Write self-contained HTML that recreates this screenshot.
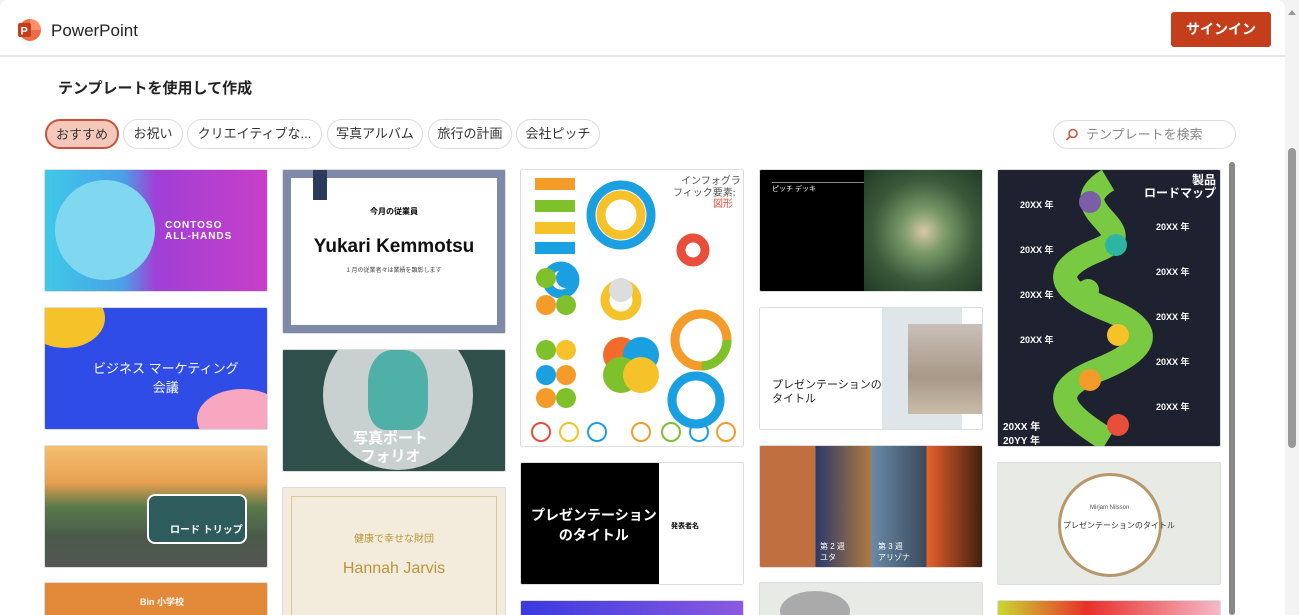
<!DOCTYPE html>
<html><head><meta charset="utf-8"><style>
*{box-sizing:border-box;margin:0;padding:0}
html,body{width:1299px;height:615px;overflow:hidden}
body{background:#f3f3f3;font-family:"Liberation Sans","Noto Sans CJK JP",sans-serif;position:relative}
.win{position:absolute;left:0;top:0;width:1285px;height:615px;background:#fff;border-radius:8px 8px 0 0;overflow:hidden}
.hdr{position:absolute;left:0;top:0;width:1285px;height:57px;border-bottom:2px solid #e6e6e6}
.logo{position:absolute;left:17px;top:18px}
.brand{position:absolute;left:51px;top:21px;font-size:17px;color:#222}
.sign{position:absolute;left:1171px;top:12px;width:100px;height:35px;background:#c43e1c;color:#fff;border-radius:3px;font-size:14px;font-weight:bold;text-align:center;line-height:35px}
h1{position:absolute;left:58px;top:77px;font-size:15px;font-weight:bold;color:#222}
.chip{position:absolute;top:119px;height:30px;border:1px solid #ddd;border-radius:15px;font-size:13px;color:#333;line-height:28px;text-align:center}
.search{position:absolute;left:1053px;top:120px;width:183px;height:29px;border:1px solid #ddd;border-radius:15px;font-size:13px;color:#888;line-height:27px;padding-left:32px}
.c{position:absolute;width:224px;border:1px solid #ddd;overflow:hidden;border-radius:2px}
.sb{position:absolute;left:1229px;top:162px;width:6px;height:453px;background:#888;border-radius:3px}
.psb{position:absolute;left:1288px;top:148px;width:8px;height:300px;background:#999;border-radius:4px}
.t{position:absolute;color:#fff;font-weight:bold}
</style></head><body>
<div class="win">
<div class="hdr">
<svg class="logo" width="24" height="24" viewBox="0 0 24 24"><circle cx="13" cy="12" r="11" fill="#ed6c47"/><path d="M13 1a11 11 0 0 1 11 11H13z" fill="#ff8f6b"/><rect x="1" y="5" width="13" height="14" rx="2" fill="#c43e1c"/><text x="3.5" y="16.5" font-size="11" font-weight="bold" fill="#fff" font-family="Liberation Sans">P</text></svg>
<div class="brand">PowerPoint</div>
<div class="sign">サインイン</div>
</div>
<h1>テンプレートを使用して作成</h1>
<div class="chip" style="left:45px;width:74px;background:#f5c8bb;border:2px solid #c4553a">おすすめ</div>
<div class="chip" style="left:123px;width:60px">お祝い</div>
<div class="chip" style="left:187px;width:135px">クリエイティブな...</div>
<div class="chip" style="left:327px;width:96px">写真アルバム</div>
<div class="chip" style="left:428px;width:84px">旅行の計画</div>
<div class="chip" style="left:516px;width:84px">会社ピッチ</div>
<div class="search"><svg style="position:absolute;left:11px;top:7px" width="14" height="14" viewBox="0 0 14 14"><circle cx="8" cy="5.5" r="4" fill="none" stroke="#c4553a" stroke-width="1.5"/><path d="M5 8.5L1.5 12" stroke="#c4553a" stroke-width="1.6"/></svg>テンプレートを検索</div>

<!-- col1 -->
<div class="c" style="left:44px;top:169px;height:123px;background:linear-gradient(90deg,#3ec9e8 0,#4aa0e8 35%,#a03fd6 50%,#c83fc8)"><div style="position:absolute;left:10px;top:10px;width:100px;height:100px;border-radius:50%;background:#7fd8f0"></div><div class="t" style="left:120px;top:50px;font-size:10px;letter-spacing:1px">CONTOSO<br>ALL-HANDS</div></div>
<div class="c" style="left:44px;top:307px;height:123px;background:#2f4de6"><div style="position:absolute;left:-20px;top:-20px;width:80px;height:60px;border-radius:50%;background:#f5c22a"></div><div style="position:absolute;right:-20px;bottom:-20px;width:90px;height:60px;border-radius:50%;background:#f7a7c0"></div><div class="t" style="left:48px;top:50px;font-size:13px;font-weight:normal;text-align:center">ビジネス マーケティング<br>会議</div></div>
<div class="c" style="left:44px;top:445px;height:123px;background:linear-gradient(180deg,#f0c070 0,#e8a050 30%,#5a7a4a 50%,#4a5a4a 75%,#555 100%)"><div style="position:absolute;left:102px;top:48px;width:100px;height:50px;background:#2e5b5b;border:2px solid #fff;border-radius:8px"></div><div class="t" style="left:125px;top:75px;font-size:10px">ロード トリップ</div></div>
<div class="c" style="left:44px;top:582px;height:40px;background:#e38a3a"><div class="t" style="left:95px;top:12px;font-size:9px">Bin 小学校</div></div>
<!-- col2 -->
<div class="c" style="left:282px;top:169px;height:165px;background:#7f8aa8;padding:8px"><div style="background:#fff;width:100%;height:100%;position:relative"><div style="position:absolute;left:22px;top:-8px;width:14px;height:30px;background:#2b3a5c"></div><div style="position:absolute;top:28px;width:100%;text-align:center;font-size:8px;font-weight:bold">今月の従業員</div><div style="position:absolute;top:58px;width:100%;text-align:center;font-size:19px;font-weight:bold;color:#111">Yukari Kemmotsu</div><div style="position:absolute;top:87px;width:100%;text-align:center;font-size:6px;color:#444">1 月の従業者々は業績を顕彰します</div></div></div>
<div class="c" style="left:282px;top:349px;height:123px;background:#2f4f4a"><div style="position:absolute;left:40px;top:-30px;width:150px;height:150px;border-radius:50%;background:#c8d0d0"></div><div style="position:absolute;left:85px;top:0;width:60px;height:80px;border-radius:40% 40% 30% 30%;background:#4fb0a8"></div><div class="t" style="left:70px;top:80px;font-size:15px;text-align:center;line-height:18px">写真ポート<br>フォリオ</div></div>
<div class="c" style="left:282px;top:487px;height:135px;background:#f3ecdc"><div style="position:absolute;left:8px;top:8px;right:8px;bottom:0;border:1px solid #d8c89a"></div><div style="position:absolute;top:42px;width:100%;text-align:center;font-size:10px;color:#b8963a">健康で幸せな財団</div><div style="position:absolute;top:72px;width:100%;text-align:center;font-size:16px;color:#b8963a">Hannah Jarvis</div></div>
<!-- col3 -->
<div class="c" style="left:520px;top:169px;height:278px;background:#fff">
<svg width="224" height="278"><g stroke-width="9" fill="none"><circle cx="40" cy="110" r="14" stroke="#1aa0e0"/><circle cx="100" cy="45" r="30" stroke="#1aa0e0"/><circle cx="100" cy="45" r="20" stroke="#f5c22a"/><circle cx="172" cy="80" r="12" stroke="#e84e3a"/><circle cx="100" cy="130" r="16" stroke="#f5c22a"/><circle cx="180" cy="170" r="26" stroke="#f39c2a"/><circle cx="180" cy="170" r="26" stroke="#7ec12b" stroke-dasharray="40 200"/><circle cx="175" cy="230" r="24" stroke="#1aa0e0"/></g>
<rect x="14" y="8" width="40" height="12" fill="#f39c2a"/><rect x="14" y="30" width="40" height="12" fill="#7ec12b"/><rect x="14" y="52" width="40" height="12" fill="#f5c22a"/><rect x="14" y="72" width="40" height="12" fill="#1aa0e0"/>
<circle cx="25" cy="108" r="10" fill="#7ec12b"/><circle cx="45" cy="108" r="10" fill="#1aa0e0"/><circle cx="25" cy="135" r="10" fill="#f39c2a"/><circle cx="45" cy="135" r="10" fill="#7ec12b"/><circle cx="25" cy="180" r="10" fill="#7ec12b"/><circle cx="45" cy="180" r="10" fill="#f5c22a"/><circle cx="25" cy="205" r="10" fill="#1aa0e0"/><circle cx="45" cy="205" r="10" fill="#f39c2a"/><circle cx="25" cy="228" r="10" fill="#f39c2a"/><circle cx="45" cy="228" r="10" fill="#7ec12b"/>
<circle cx="100" cy="185" r="18" fill="#f36b2a"/><circle cx="120" cy="185" r="18" fill="#1aa0e0"/><circle cx="100" cy="205" r="18" fill="#7ec12b"/><circle cx="120" cy="205" r="18" fill="#f5c22a"/><circle cx="100" cy="120" r="12" fill="#ddd"/>
<g fill="none" stroke-width="2"><circle cx="20" cy="262" r="9" stroke="#e84e3a"/><circle cx="48" cy="262" r="9" stroke="#f5c22a"/><circle cx="76" cy="262" r="9" stroke="#1aa0e0"/><circle cx="120" cy="262" r="9" stroke="#f39c2a"/><circle cx="150" cy="262" r="9" stroke="#7ec12b"/><circle cx="178" cy="262" r="9" stroke="#1aa0e0"/><circle cx="205" cy="262" r="9" stroke="#f39c2a"/></g>
<text x="160" y="14" font-size="10" fill="#555" font-family="Noto Sans CJK JP">インフォグラ</text><text x="152" y="26" font-size="10" fill="#555" font-family="Noto Sans CJK JP">フィック要素:</text><text x="192" y="37" font-size="10" fill="#e84e3a" font-family="Noto Sans CJK JP">図形</text></svg></div>
<div class="c" style="left:520px;top:462px;height:123px;background:#fff"><div style="position:absolute;left:0;top:0;width:138px;height:123px;background:#000"></div><div class="t" style="left:10px;top:42px;font-size:14px;text-align:center;line-height:20px">プレゼンテーション<br>のタイトル</div><div style="position:absolute;left:150px;top:58px;font-size:7px;font-weight:bold">発表者名</div></div>
<div class="c" style="left:520px;top:600px;height:30px;background:linear-gradient(90deg,#3a3ae0,#8a5ae0)"></div>
<!-- col4 -->
<div class="c" style="left:759px;top:169px;height:123px;background:#000"><div style="position:absolute;left:104px;top:0;width:120px;height:123px;background:radial-gradient(circle at 50% 50%,#d8c8a8 0,#7a9a6a 25%,#3a5a3a 60%,#203a25)"></div><div style="position:absolute;left:12px;top:14px;font-size:7px;color:#fff">ピッチ デッキ</div><div style="position:absolute;left:12px;top:12px;width:92px;height:1px;background:#888"></div></div>
<div class="c" style="left:759px;top:307px;height:123px;background:#fff"><div style="position:absolute;left:122px;top:0;width:80px;height:123px;background:#dfe6ea"></div><div style="position:absolute;left:148px;top:16px;width:76px;height:90px;background:linear-gradient(180deg,#c8c0b8,#a89888 60%,#c8bca8)"></div><div style="position:absolute;left:12px;top:70px;font-size:11px;color:#222;line-height:14px">プレゼンテーションの<br>タイトル</div></div>
<div class="c" style="left:759px;top:445px;height:123px;background:linear-gradient(90deg,#c07040 0,#c07040 25%,#2a3a6a 25%,#b07a40 50%,#6a8aa8 50%,#3a4a5a 75%,#e8602a 75%,#402010)"><div class="t" style="left:60px;top:95px;font-size:8px;font-weight:normal">第 2 週<br>ユタ</div><div class="t" style="left:118px;top:95px;font-size:8px;font-weight:normal">第 3 週<br>アリゾナ</div></div>
<div class="c" style="left:759px;top:582px;height:40px;background:#e8eae6"><div style="position:absolute;left:20px;top:8px;width:70px;height:40px;border-radius:50%;background:#aaa"></div></div>
<!-- col5 -->
<div class="c" style="left:997px;top:169px;height:278px;background:#1e2230">
<svg width="224" height="278"><path d="M110 10 C60 40 150 60 100 80 S60 120 110 140 S150 180 100 200 S60 240 110 270" fill="none" stroke="#7ac943" stroke-width="24"/><g><circle cx="92" cy="32" r="11" fill="#7b5ea7"/><circle cx="118" cy="75" r="11" fill="#2cb5a0"/><circle cx="90" cy="120" r="11" fill="#7ac943"/><circle cx="120" cy="165" r="11" fill="#f5c22a"/><circle cx="92" cy="210" r="11" fill="#f39c2a"/><circle cx="120" cy="255" r="11" fill="#e84e3a"/></g>
<g fill="#fff" font-size="9" font-weight="bold" font-family="Liberation Sans,Noto Sans CJK JP"><text x="22" y="38">20XX 年</text><text x="22" y="83">20XX 年</text><text x="22" y="128">20XX 年</text><text x="22" y="173">20XX 年</text><text x="158" y="60">20XX 年</text><text x="158" y="105">20XX 年</text><text x="158" y="150">20XX 年</text><text x="158" y="195">20XX 年</text><text x="158" y="240">20XX 年</text><text x="5" y="260" font-size="10">20XX 年</text><text x="5" y="274" font-size="10">20YY 年</text><text x="194" y="14" font-size="12">製品</text><text x="146" y="27" font-size="12">ロードマップ</text></g></svg></div>
<div class="c" style="left:997px;top:462px;height:123px;background:#e8eae6"><div style="position:absolute;left:60px;top:10px;width:104px;height:104px;border-radius:50%;border:3px solid #b8986a;background:#fff"></div><div style="position:absolute;left:65px;top:57px;font-size:8px;color:#333">プレゼンテーションのタイトル</div><div style="position:absolute;left:92px;top:42px;font-size:6px;color:#555">Mirjam Nilsson</div></div>
<div class="c" style="left:997px;top:600px;height:30px;background:linear-gradient(90deg,#c8d830,#e8302a 40%,#f5b8c8)"></div>
<div class="sb"></div>
</div>
<svg style="position:absolute;left:1286px;top:8px" width="12" height="8"><path d="M2 7L6 2L10 7z" fill="#999"/></svg>
<div class="psb"></div>
</body></html>
